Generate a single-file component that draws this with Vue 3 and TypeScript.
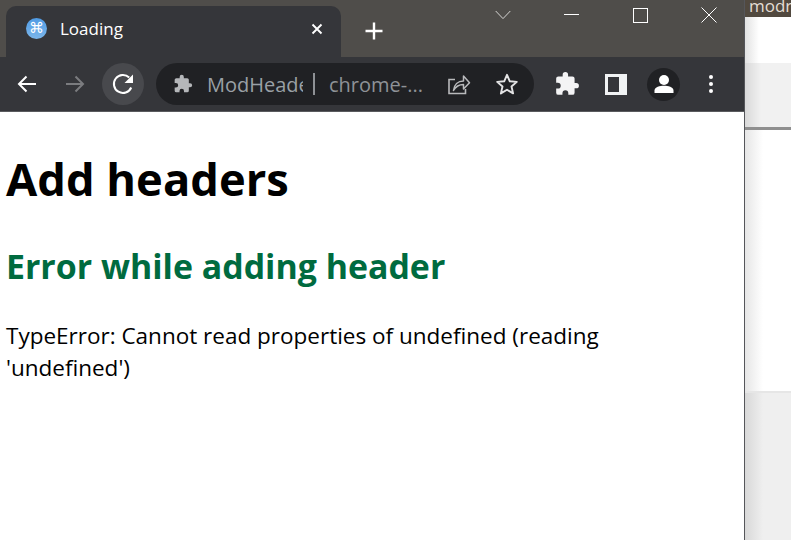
<template>
  <div class="desktop">
    <div class="browser">
      <div class="titlebar">
        <div class="tab">
          <span class="favicon">⌘</span>
          <span class="tab-title">Loading</span>
          <svg class="tab-close" width="12" height="12" viewBox="0 0 12 12">
            <path d="M1.500 1.500l9 9M10.500 1.500l-9 9" stroke="#fff" stroke-width="1.9" fill="none" />
          </svg>
        </div>
        <svg class="new-tab" width="20" height="20" viewBox="0 0 20 20">
          <path d="M10 1.500v17M1.500 10h17" stroke="#fff" stroke-width="2.4" fill="none" />
        </svg>
        <div class="window-controls">
          <svg width="16" height="10" viewBox="0 0 16 10" class="win-chevron">
            <path d="M.7 1l7.3 7.6L15.3 1" stroke="#d6d5d3" stroke-width="1" fill="none" />
          </svg>
          <svg width="15" height="3" viewBox="0 0 15 3" class="win-min">
            <path d="M0 1.500h15" stroke="#fff" stroke-width="1" fill="none" />
          </svg>
          <svg width="15" height="15" viewBox="0 0 15 15" class="win-max">
            <rect x=".5" y=".5" width="14" height="14" stroke="#fff" stroke-width="1" fill="none" />
          </svg>
          <svg width="16" height="16" viewBox="0 0 16 16" class="win-close">
            <path d="M.5.5l15 15M15.500.5l-15 15" stroke="#fff" stroke-width="1" fill="none" />
          </svg>
        </div>
      </div>

      <div class="toolbar">
        <svg class="nav back" width="22" height="20" viewBox="0 0 22 20">
          <path d="M20 10H3M10.500 2.500L3 10l7.500 7.500" stroke="#fff" stroke-width="2" fill="none" />
        </svg>
        <svg class="nav forward" width="22" height="20" viewBox="0 0 22 20">
          <path d="M2 10h17M11.500 2.500L19 10l-7.500 7.500" stroke="#7b7c7f" stroke-width="2" fill="none" />
        </svg>
        <div class="reload">
          <svg width="24" height="24" viewBox="0 0 24 24">
            <path d="M20.200 15.500a9 9 0 1 1-2-10" stroke="#fff" stroke-width="2" fill="none" />
            <path d="M22 2.500v8.500h-8.500z" fill="#fff" />
          </svg>
        </div>
        <div class="omnibox">
          <svg class="puzzle small" width="20" height="20" viewBox="0 0 24 24">
            <path :d="puzzlePath" fill="#b5b7ba" />
          </svg>
          <span class="ext-name">ModHeader</span>
          <span class="divider" />
          <span class="url">chrome-...</span>
          <svg class="share" width="24" height="24" viewBox="0 0 24 24">
            <path d="M8 7.500H2v14h16.500v-4.500" stroke="#b9babc" stroke-width="1.600" fill="none" />
            <path d="M6.500 18.500c.6-6 4.500-9.500 10-9.500V4l6 6.700-6 6.300v-4.500c-4.500 0-7.800 2-10 6z" stroke="#b9babc" stroke-width="1.500" fill="none" stroke-linejoin="round" />
          </svg>
          <svg class="star" width="24" height="24" viewBox="0 0 24 24">
            <path d="M12 2.800l2.800 6.500 7 .6-5.300 4.600 1.600 6.900-6.100-3.700-6.100 3.700 1.600-6.900-5.300-4.600 7-.6z" stroke="#e3e3e4" stroke-width="1.900" fill="none" stroke-linejoin="round" />
          </svg>
        </div>
        <svg class="puzzle big" width="26" height="26" viewBox="0 0 24 24">
          <path :d="puzzlePath" fill="#f4f4f5" />
        </svg>
        <svg class="sidepanel" width="22" height="21" viewBox="0 0 22 21">
          <path fill-rule="evenodd" d="M0 0h22v21H0zM3 3v15h11V3z" fill="#f1f3f4" />
        </svg>
        <div class="avatar">
          <svg width="22" height="22" viewBox="0 0 22 22">
            <circle cx="11" cy="7" r="5" fill="#fff" />
            <path d="M1.500 20v-2.500C1.500 14 7 12.800 11 12.800s9.500 1.200 9.500 4.700V20z" fill="#fff" />
          </svg>
        </div>
        <div class="kebab"><i /><i /><i /></div>
      </div>

      <main class="page">
        <h1>Add headers</h1>
        <h2>Error while adding header</h2>
        <p>TypeError: Cannot read properties of undefined (reading 'undefined')</p>
      </main>
    </div>

    <aside class="behind">
      <div class="behind-tab">modr</div>
      <div class="behind-white" />
      <div class="behind-grey" />
      <div class="behind-rule" />
      <div class="behind-body" />
      <div class="behind-rule-light" />
      <div class="behind-foot" />
    </aside>
  </div>
</template>

<script setup lang="ts">
// same glyph in the omnibox and on the toolbar
const puzzlePath =
  'M20.500 11H19V7a2 2 0 0 0-2-2h-4V3.500a2.500 2.500 0 0 0-5 0V5H4a2 2 0 0 0-2 2v3.800h1.500a2.700 2.700 0 0 1 0 5.400H2V20a2 2 0 0 0 2 2h3.800v-1.500a2.700 2.700 0 0 1 5.400 0V22H17a2 2 0 0 0 2-2v-4h1.500a2.500 2.500 0 0 0 0-5z'
</script>

<style>
html,
body {
  margin: 0;
  overflow: hidden;
}
</style>

<style scoped>
.desktop {
  display: flex;
  width: 791px;
  height: 540px;
  overflow: hidden;
  font-family: "Open Sans", "Noto Sans", sans-serif;
}

.browser {
  display: flex;
  flex-direction: column;
  width: 744px;
  flex: none;
  border-right: 1px solid #55565a;
  background: #fff;
}

.titlebar {
  display: flex;
  align-items: flex-start;
  height: 57px;
  padding: 6px 0 0 6px;
  box-sizing: border-box;
  background: #4f4d4a;
  flex: none;
}

.tab {
  display: flex;
  align-items: center;
  width: 335px;
  height: 51px;
  box-sizing: border-box;
  padding: 0 18px 6px 20px;
  background: #35363a;
  border-radius: 10px 10px 0 0;
  flex: none;
}

.favicon {
  display: flex;
  align-items: center;
  justify-content: center;
  width: 21px;
  height: 21px;
  border-radius: 50%;
  background: linear-gradient(180deg, #4f9be4, #7cb6ea);
  color: #fff;
  font-family: "DejaVu Sans", sans-serif;
  font-size: 15px;
  line-height: 1;
}

.tab-title {
  margin-left: 13px;
  color: #fff;
  font-size: 17px;
  flex: 1;
}

.new-tab {
  margin: 15px 0 0 23px;
  flex: none;
}

.window-controls {
  display: flex;
  align-items: flex-start;
  margin-left: 111px;
}

.win-chevron {
  margin-top: 4px;
}

.win-min {
  margin: 7px 0 0 53px;
}

.win-max {
  margin: 2px 0 0 54px;
}

.win-close {
  margin: 1px 0 0 53px;
}

.toolbar {
  display: flex;
  align-items: center;
  height: 55px;
  padding: 0 0 0 16px;
  box-sizing: border-box;
  background: #35363a;
  border-bottom: 1px solid #5a5b5e;
  flex: none;
}

.nav {
  flex: none;
}

.forward {
  margin-left: 26px;
}

.reload {
  display: flex;
  align-items: center;
  justify-content: center;
  width: 42px;
  height: 42px;
  margin-left: 16px;
  border-radius: 50%;
  background: #48494d;
  flex: none;
}

.omnibox {
  display: flex;
  align-items: center;
  width: 378px;
  height: 42px;
  margin-left: 12px;
  padding-left: 17px;
  box-sizing: border-box;
  border-radius: 21px;
  background: #202124;
  flex: none;
}

.ext-name {
  width: 96px;
  margin-left: 14px;
  overflow: hidden;
  white-space: nowrap;
  color: #9aa0a6;
  font-size: 20px;
}

.divider {
  width: 2px;
  height: 22px;
  margin-left: 10px;
  background: #8e9195;
}

.url {
  width: 103px;
  margin-left: 14px;
  white-space: nowrap;
  color: #8e9297;
  font-size: 20px;
}

.share {
  margin-left: 15px;
}

.star {
  margin-left: 24px;
}

.big {
  margin-left: 20px;
  flex: none;
}

.sidepanel {
  margin-left: 25px;
  flex: none;
}

.avatar {
  display: flex;
  align-items: center;
  justify-content: center;
  width: 33px;
  height: 33px;
  margin-left: 20px;
  border-radius: 50%;
  background: #202124;
  flex: none;
}

.kebab {
  display: flex;
  flex-direction: column;
  gap: 3px;
  margin-left: 29px;
}

.kebab i {
  width: 4px;
  height: 4px;
  border-radius: 50%;
  background: #fff;
}

.page {
  flex: 1;
  padding: 0 6px;
  color: #000;
}

h1 {
  margin: 37px 0 0;
  font-size: 45.3px;
  line-height: 60px;
  font-weight: 700;
}

h2 {
  margin: 35px 0 0;
  color: #006b3f;
  font-size: 33.9px;
  line-height: 44px;
  font-weight: 700;
}

p {
  width: 640px;
  margin: 32px 0 0;
  font-size: 22.5px;
  line-height: 32px;
}

.behind {
  flex: 1;
  display: flex;
  flex-direction: column;
  min-width: 0;
  background: #fff;
}

.behind-tab {
  height: 17px;
  padding-left: 4px;
  overflow: hidden;
  background: #51493f;
  color: #e4ded5;
  font-size: 17px;
  line-height: 11px;
}

.behind-white {
  height: 46px;
  background: linear-gradient(90deg, #e2e2e2, #fff 14px);
}

.behind-grey {
  height: 64px;
  background: linear-gradient(90deg, #d9d9d9, #f1f1f1 16px);
}

.behind-rule {
  height: 3px;
  background: #8f8f8f;
}

.behind-body {
  height: 261px;
  background: linear-gradient(90deg, #e6e6e6, #fff 18px);
}

.behind-rule-light {
  height: 2px;
  background: #e6e6e6;
}

.behind-foot {
  flex: 1;
  background: linear-gradient(90deg, #d8d8d8, #efefef 18px);
}
</style>
